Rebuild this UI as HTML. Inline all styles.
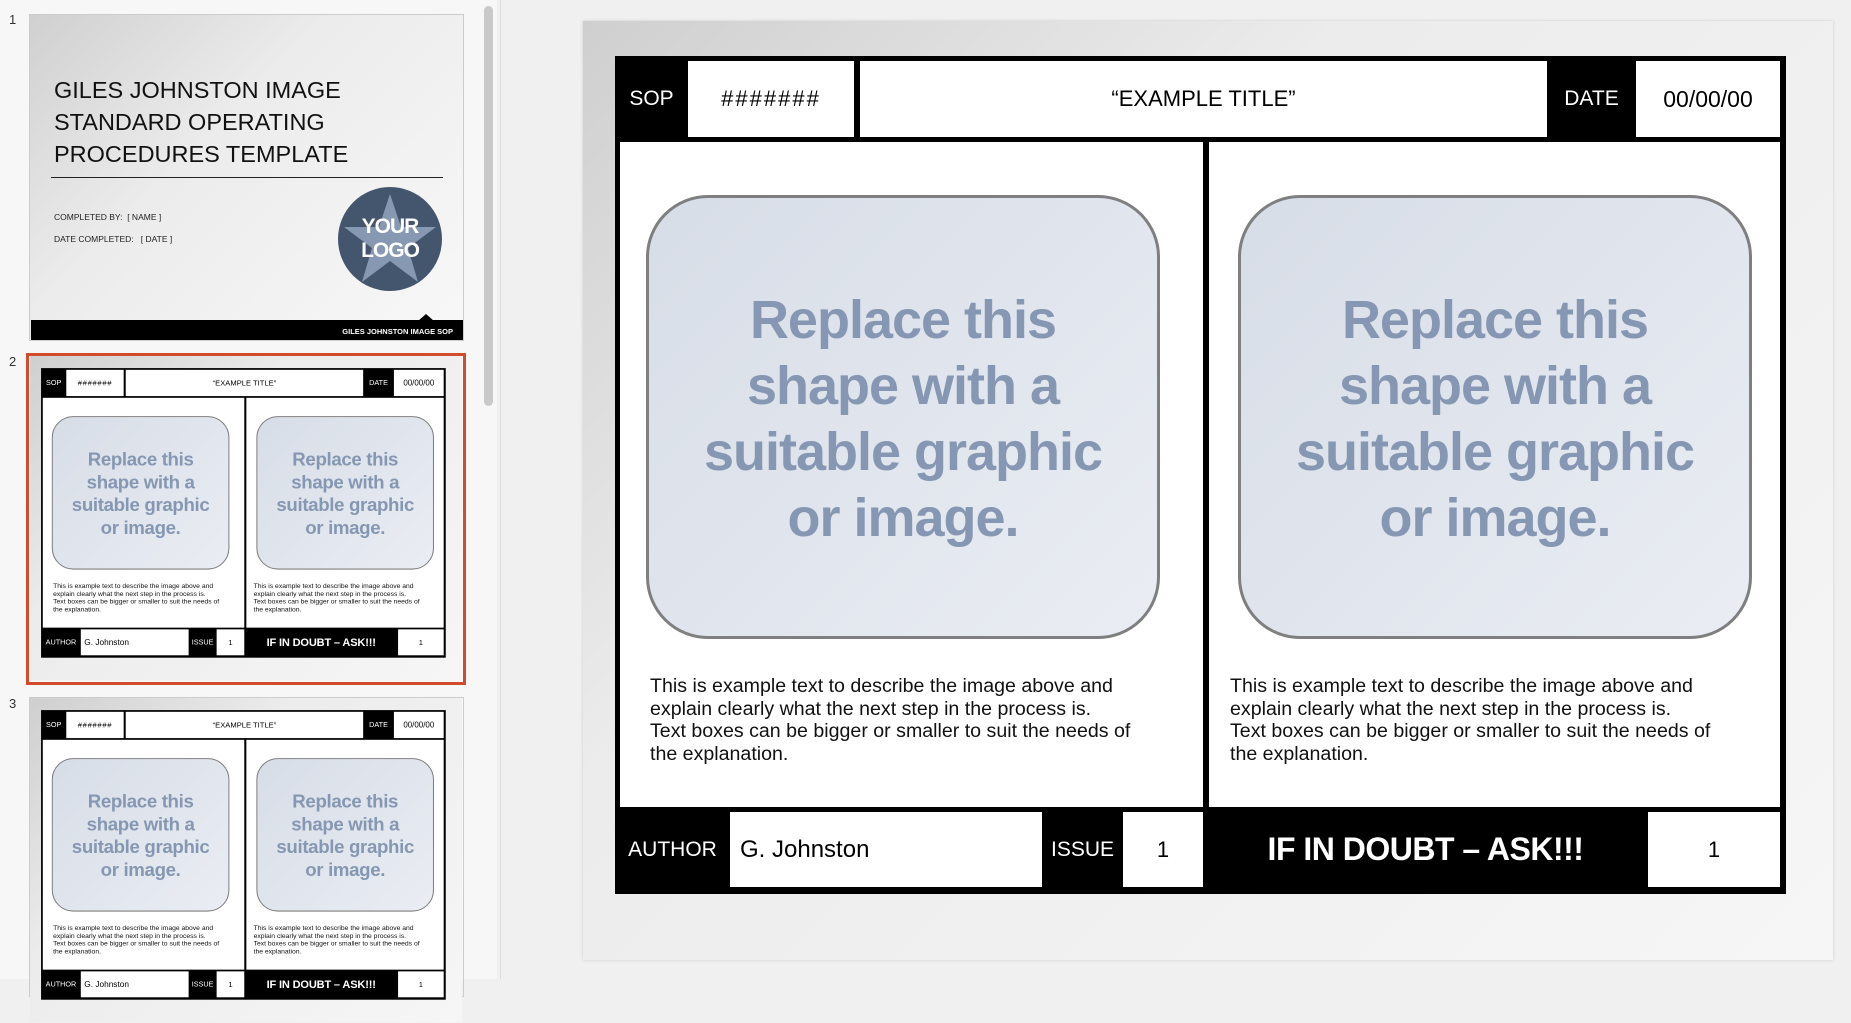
<!DOCTYPE html>
<html><head><meta charset="utf-8"><style>
*{margin:0;padding:0;box-sizing:border-box}
body{width:1851px;height:979px;overflow:hidden;background:#f0f0f0;font-family:"Liberation Sans",sans-serif;position:relative}
.a{position:absolute}
.slide{position:absolute;width:1250px;height:939px;background:linear-gradient(135deg,#cfcfcf 0%,#ececec 35%,#f6f6f6 100%);overflow:hidden}
.w{position:absolute;background:#fff}
.t{position:absolute;display:flex;align-items:center;justify-content:center;white-space:nowrap}
.box{position:absolute;top:174px;width:514px;height:444px;border:3px solid #7f7f7f;border-radius:62px;background:linear-gradient(135deg,#d7dde7,#eaedf3);color:#8597b2;font-weight:bold;font-size:54px;line-height:66px;text-align:center;padding-top:89px;letter-spacing:-1px}
.desc{position:absolute;top:654px;font-size:19.6px;line-height:22.5px;color:#111;white-space:nowrap}
.thumb{position:absolute;transform-origin:0 0;transform:scale(0.3456)}
</style></head><body>
<div class="a" style="left:0;top:0;width:497px;height:979px;background:#f7f7f7"></div>
<div class="a" style="left:484px;top:6px;width:9px;height:400px;background:#c9c9c9;border-radius:5px"></div>
<div class="a" style="left:500px;top:0;width:1px;height:979px;background:#ddd"></div>
<div class="a" style="left:9px;top:12px;font-size:13px;color:#333">1</div>
<div class="a" style="left:9px;top:354px;font-size:13px;color:#333">2</div>
<div class="a" style="left:9px;top:696px;font-size:13px;color:#333">3</div>

<div class="a" style="left:29px;top:14px;width:435px;height:327px;border:1px solid #ccc;background:linear-gradient(135deg,#d0d0d0,#ececec 40%,#f8f8f8);overflow:hidden">
<div class="a" style="left:24px;top:59px;font-size:23.5px;line-height:32px;color:#111">GILES JOHNSTON IMAGE<br>STANDARD OPERATING<br>PROCEDURES TEMPLATE</div>
<div class="a" style="left:21px;top:162px;width:392px;height:1px;background:#222"></div>
<div class="a" style="left:24px;top:197px;font-size:8.5px;color:#222">COMPLETED BY: &nbsp;[ NAME ]</div>
<div class="a" style="left:24px;top:219px;font-size:8.5px;color:#222">DATE COMPLETED: &nbsp; [ DATE ]</div>
<svg class="a" style="left:307px;top:171px" width="106" height="106" viewBox="0 0 106 106"><circle cx="53" cy="53" r="52" fill="#44556e"/><polygon points="53,8 64,41 99,41 71,62 81,96 53,75 25,96 35,62 7,41 42,41" fill="#8798b3"/><text x="53" y="47" text-anchor="middle" font-family="Liberation Sans" font-weight="bold" font-size="21" fill="#fff" letter-spacing="-1">YOUR</text><text x="53" y="71" text-anchor="middle" font-family="Liberation Sans" font-weight="bold" font-size="21" fill="#fff" letter-spacing="-1">LOGO</text></svg>
<div class="a" style="left:1px;top:305px;width:433px;height:21px;background:#000"></div>
<div class="a" style="left:388px;top:299px;width:0;height:0;border-left:8px solid transparent;border-right:8px solid transparent;border-bottom:7px solid #000"></div>
<div class="a" style="right:10px;top:312px;font-size:7.5px;font-weight:bold;color:#fff">GILES JOHNSTON IMAGE SOP</div>
</div>

<div class="a" style="left:26px;top:353px;width:440px;height:332px;border:3px solid #d24b2b"></div>
<div class="a" style="left:29px;top:697px;width:435px;height:300px;border:1px solid #ccc"></div>

<template id="tp">
<div class="a" style="left:32px;top:35px;width:1171px;height:838px;background:#000"></div>
<div class="w" style="left:105px;top:40px;width:166px;height:76px"></div>
<div class="w" style="left:277px;top:40px;width:687px;height:76px"></div>
<div class="w" style="left:1053px;top:40px;width:144px;height:76px"></div>
<div class="w" style="left:37px;top:121px;width:583px;height:665px"></div>
<div class="w" style="left:626px;top:121px;width:571px;height:665px"></div>
<div class="w" style="left:147px;top:791px;width:312px;height:75px"></div>
<div class="w" style="left:540px;top:791px;width:80px;height:75px"></div>
<div class="w" style="left:1065px;top:791px;width:132px;height:75px"></div>
<div class="t" style="left:32px;top:40px;width:73px;height:76px;color:#fff;font-size:21px">SOP</div>
<div class="t" style="left:105px;top:40px;width:166px;height:76px;font-size:22px;letter-spacing:2px">#######</div>
<div class="t" style="left:277px;top:40px;width:687px;height:76px;font-size:22px">“EXAMPLE TITLE”</div>
<div class="t" style="left:964px;top:40px;width:89px;height:76px;color:#fff;font-size:21px">DATE</div>
<div class="t" style="left:1053px;top:40px;width:144px;height:76px;font-size:23px">00/00/00</div>
<div class="box" style="left:63px">Replace this<br>shape with a<br>suitable graphic<br>or image.</div>
<div class="box" style="left:655px">Replace this<br>shape with a<br>suitable graphic<br>or image.</div>
<div class="desc" style="left:67px">This is example text to describe the image above and<br>explain clearly what the next step in the process is.<br>Text boxes can be bigger or smaller to suit the needs of<br>the explanation.</div>
<div class="desc" style="left:647px">This is example text to describe the image above and<br>explain clearly what the next step in the process is.<br>Text boxes can be bigger or smaller to suit the needs of<br>the explanation.</div>
<div class="t" style="left:32px;top:791px;width:115px;height:75px;color:#fff;font-size:21px">AUTHOR</div>
<div class="t" style="left:157px;top:791px;height:75px;font-size:24px;justify-content:flex-start">G. Johnston</div>
<div class="t" style="left:459px;top:791px;width:81px;height:75px;color:#fff;font-size:21px">ISSUE</div>
<div class="t" style="left:540px;top:791px;width:80px;height:75px;font-size:22px">1</div>
<div class="t" style="left:620px;top:791px;width:445px;height:75px;color:#fff;font-size:32px;font-weight:bold;letter-spacing:-0.5px">IF IN DOUBT – ASK!!!</div>
<div class="t" style="left:1065px;top:791px;width:132px;height:75px;font-size:22px">1</div>
</template>

<div class="slide" id="s1" style="left:583px;top:21px;box-shadow:0 0 3px rgba(0,0,0,.15)"></div>
<div class="slide thumb" id="s2" style="left:30px;top:356px"></div>
<div class="slide thumb" id="s3" style="left:30px;top:698px"></div>
<script>
var h=document.getElementById('tp').innerHTML;
['s1','s2','s3'].forEach(function(i){document.getElementById(i).innerHTML=h;});
</script>
</body></html>
